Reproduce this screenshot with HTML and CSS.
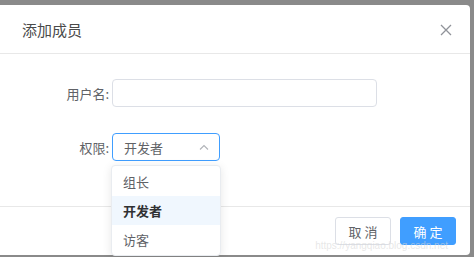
FILE: index.html
```html
<!DOCTYPE html>
<html lang="zh">
<head>
<meta charset="utf-8">
<link rel="stylesheet" href="styles.css">
</head>
<body>
<div class="dialog">
  <div class="header">
    <span class="title">添加成员</span>
    <svg class="close" width="12" height="12" viewBox="0 0 12 12"><path d="M1 1L11 11M11 1L1 11" stroke="#909399" stroke-width="1.3" fill="none"/></svg>
  </div>
  <div class="body">
    <div class="row">
      <label class="label">用户名:</label>
      <div class="input"></div>
    </div>
    <div class="row row2">
      <label class="label">权限:</label>
      <div class="select">
        <span>开发者</span>
        <svg class="arrow" width="10" height="6" viewBox="0 0 10 6"><path d="M1 5.5L5 1.5L9 5.5" stroke="#b0b3b8" stroke-width="1.1" fill="none"/></svg>
      </div>
    </div>
  </div>
  <div class="footer">
    <button class="btn">取 消</button>
    <button class="btn primary">确 定</button>
    <span class="watermark">https://yangqiao.blog.csdn.net</span>
  </div>
  <ul class="dropdown">
    <li>组长</li>
    <li class="selected">开发者</li>
    <li>访客</li>
  </ul>
</div>
</body>
</html>
```

FILE: styles.css
```css
html, body {
  margin: 0;
  padding: 0;
}
body {
  background: #8a8a8a;
  width: 474px;
  height: 257px;
  overflow: hidden;
  font-family: "Noto Sans CJK SC", "Noto Sans", sans-serif;
}
.dialog {
  position: relative;
  margin-top: 5px;
  width: 470px;
  height: 250px;
  background: #fff;
  border-radius: 0 4px 4px 0;
  display: flex;
  flex-direction: column;
}
.header {
  height: 49px;
  border-bottom: 1px solid #e8e8e8;
  display: flex;
  align-items: center;
  justify-content: space-between;
  padding: 1px 18px 0 22px;
  box-sizing: border-box;
}
.title {
  font-size: 15px;
  color: #4a4a4a;
}
.close {
  display: block;
}
.body {
  height: 152px;
  padding-top: 25px;
  box-sizing: border-box;
}
.row {
  display: flex;
  align-items: center;
  height: 28px;
}
.row2 {
  margin-top: 26px;
}
.label {
  width: 112px;
  text-align: right;
  padding-right: 3px;
  box-sizing: border-box;
  font-size: 13px;
  color: #606266;
}
.input {
  width: 265px;
  height: 28px;
  border: 1px solid #dcdfe6;
  border-radius: 4px;
  box-sizing: border-box;
}
.select {
  width: 108px;
  height: 28px;
  border: 1px solid #409eff;
  border-radius: 4px;
  box-sizing: border-box;
  display: flex;
  align-items: center;
  justify-content: space-between;
  padding: 0 10px 0 11px;
  font-size: 13px;
  color: #606266;
}
.arrow {
  display: block;
}
.footer {
  flex: 1;
  border-top: 1px solid #e8e8e8;
  display: flex;
  justify-content: flex-end;
  align-items: flex-start;
  padding: 10px 14px 0 0;
  gap: 9px;
  position: relative;
}
.btn {
  width: 56px;
  height: 28px;
  border: 1px solid #dcdfe6;
  border-radius: 3px;
  background: #fff;
  color: #606266;
  font-family: inherit;
  font-size: 13px;
  padding: 0;
}
.btn.primary {
  background: #409eff;
  border-color: #409eff;
  color: #fff;
}
.watermark {
  position: absolute;
  right: 22px;
  bottom: 4px;
  font-size: 10px;
  color: rgba(215, 215, 215, 0.6);
  font-family: "Liberation Sans", sans-serif;
}
.dropdown {
  position: absolute;
  left: 111px;
  top: 160px;
  width: 110px;
  margin: 0;
  padding: 1px 0;
  list-style: none;
  background: #fff;
  border: 1px solid #e9ecf0;
  border-radius: 4px;
  box-shadow: 0 2px 10px rgba(0, 0, 0, 0.1);
  box-sizing: border-box;
}
.dropdown li {
  height: 29px;
  line-height: 29px;
  padding-left: 11px;
  font-size: 13px;
  color: #606266;
}
.dropdown li.selected {
  background: #f0f7fe;
  color: #303133;
  font-weight: bold;
}
```
